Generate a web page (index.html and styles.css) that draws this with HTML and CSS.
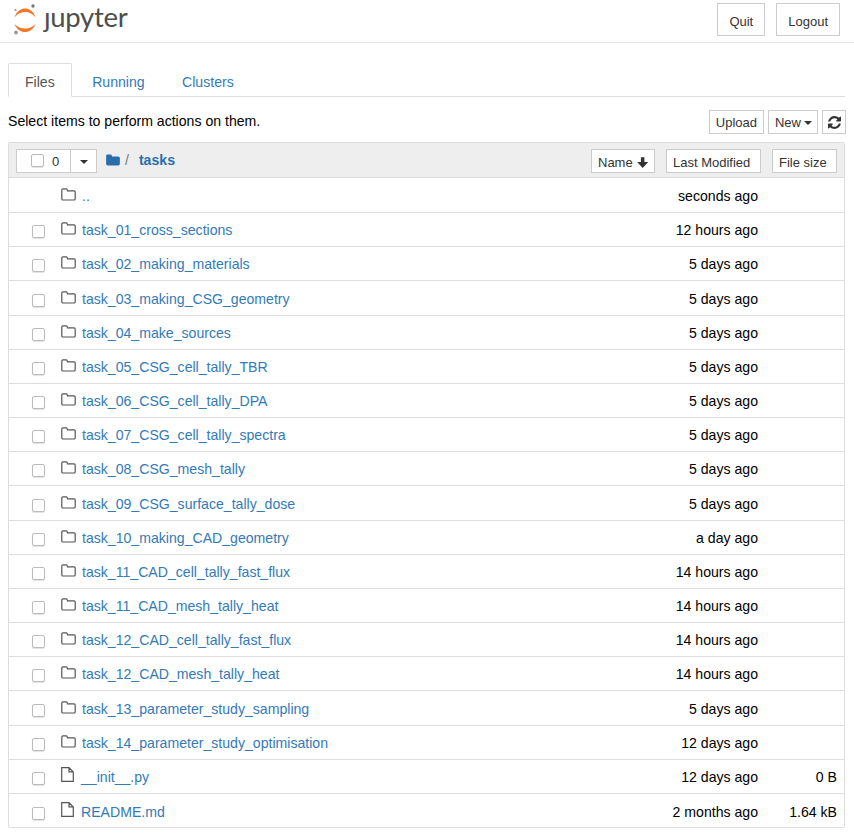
FILE: index.html
```html
<!DOCTYPE html>
<html lang="en">
<head>
<meta charset="utf-8">
<title>Home</title>
<link rel="stylesheet" href="styles.css">
</head>
<body>
<svg class="defs" width="0" height="0" aria-hidden="true">
  <symbol id="folder-o" viewBox="0 0 15 13"><path d="M.8 10.700V2Q.8 .8 2 .8H5Q6 .8 6.200 1.700L6.500 2.800H13Q14.200 2.800 14.200 4V10.700Q14.200 12 13 12H2Q.8 12 .8 10.700Z" fill="none" stroke="currentColor" stroke-width="1.200"/></symbol>
  <symbol id="file-o" viewBox="0 0 13 15"><path d="M.7 .7H8L12.300 4.900V14.300H.7ZM8 .7V4.900H12.300" fill="none" stroke="currentColor" stroke-width="1.200"/></symbol>
</svg>
<header class="topbar">
  <a class="logo" href="#">
    <svg class="logo-mark" viewBox="0 0 26 36" width="26" height="36">
      <path d="M2.500 17.500C4.500 11 9 8.500 13 8.500S21.500 11 23.500 17.500C20.500 13.500 17 12 13 12S5.500 13.500 2.500 17.500Z" fill="#f37726"/>
      <path d="M2.500 24C4.500 29.500 9 32 13 32S21.500 29.500 23.500 24C20.500 27 17 28.500 13 28.500S5.500 27 2.500 24Z" fill="#f37726"/>
      <circle cx="21" cy="6" r="1.700" fill="#767677"/>
      <circle cx="3.500" cy="10" r="1.100" fill="#989798"/>
      <circle cx="4" cy="32.500" r="2" fill="#9e9e9e"/>
    </svg>
    <span class="logo-text">ȷupyter</span>
  </a>
  <div class="top-actions">
    <a class="btn top-btn" href="#">Quit</a>
    <a class="btn top-btn" href="#">Logout</a>
  </div>
</header>
<main class="page">
  <nav class="tabs">
    <a class="tab active" href="#">Files</a>
    <a class="tab" href="#">Running</a>
    <a class="tab" href="#">Clusters</a>
  </nav>
  <div class="toolbar">
    <span>Select items to perform actions on them.</span>
    <div class="toolbar-actions">
      <a class="btn small" href="#">Upload</a>
      <a class="btn small new" href="#">New <i class="caret"></i></a>
      <a class="btn small refresh" href="#" aria-label="Refresh">
        <svg viewBox="0 0 1536 1536" width="13" height="13"><path fill="#333" d="M1511 928q0 5-1 7-64 268-268 434.500T764 1536q-146 0-282.500-55T238 1324l-129 129q-19 19-45 19t-45-19-19-45V960q0-26 19-45t45-19h448q26 0 45 19t19 45-19 45l-137 137q71 66 161 102t187 36q134 0 250-65t186-179q11-17 53-117 8-23 30-23h192q13 0 22.500 9.500t9.500 22.500zm25-800v448q0 26-19 45t-45 19h-448q-26 0-45-19t-19-45 19-45l138-138Q969 256 768 256q-134 0-250 65T332 500q-11 17-53 117-8 23-30 23H50q-13 0-22.500-9.500T18 608v-7q65-268 270-434.500T768 0q146 0 284 55.500T1297 212l130-129q19-19 45-19t45 19 19 45z"/></svg>
      </a>
    </div>
  </div>
  <section class="list">
    <div class="list-head">
      <div class="select-group">
        <span class="select-main"><span class="check"></span><span class="count">0</span></span>
        <span class="select-drop"><i class="caret dark"></i></span>
      </div>
      <svg class="crumb-folder" viewBox="0 0 16 14" width="14" height="12"><path fill="#296eaa" d="M0 2.200Q0 .7 1.500 .7H5Q6.300 .7 6.700 2L7 3H14Q16 3 16 4.800V11.500Q16 13.300 14 13.300H2Q0 13.300 0 11.500Z"/></svg>
      <span class="crumb-sep">/</span>
      <a class="crumb" href="#">tasks</a>
      <div class="sort">
        <a class="btn small sort-name" href="#">Name <svg viewBox="0 0 13 13" width="13" height="13"><path fill="#333" d="M4.500 .5H8.500V6H12.800L6.500 12.800 .2 6H4.500Z"/></svg></a>
        <a class="btn small sort-modified" href="#">Last Modified</a>
        <a class="btn small sort-size" href="#">File size</a>
      </div>
    </div>
    <div class="row parent"><span></span><svg class="icon folder"><use href="#folder-o"/></svg><a href="#">..</a><time>seconds ago</time><span class="size"></span></div>
    <div class="row"><span class="check"></span><svg class="icon folder"><use href="#folder-o"/></svg><a href="#">task_01_cross_sections</a><time>12 hours ago</time><span class="size"></span></div>
    <div class="row"><span class="check"></span><svg class="icon folder"><use href="#folder-o"/></svg><a href="#">task_02_making_materials</a><time>5 days ago</time><span class="size"></span></div>
    <div class="row"><span class="check"></span><svg class="icon folder"><use href="#folder-o"/></svg><a href="#">task_03_making_CSG_geometry</a><time>5 days ago</time><span class="size"></span></div>
    <div class="row"><span class="check"></span><svg class="icon folder"><use href="#folder-o"/></svg><a href="#">task_04_make_sources</a><time>5 days ago</time><span class="size"></span></div>
    <div class="row"><span class="check"></span><svg class="icon folder"><use href="#folder-o"/></svg><a href="#">task_05_CSG_cell_tally_TBR</a><time>5 days ago</time><span class="size"></span></div>
    <div class="row"><span class="check"></span><svg class="icon folder"><use href="#folder-o"/></svg><a href="#">task_06_CSG_cell_tally_DPA</a><time>5 days ago</time><span class="size"></span></div>
    <div class="row"><span class="check"></span><svg class="icon folder"><use href="#folder-o"/></svg><a href="#">task_07_CSG_cell_tally_spectra</a><time>5 days ago</time><span class="size"></span></div>
    <div class="row"><span class="check"></span><svg class="icon folder"><use href="#folder-o"/></svg><a href="#">task_08_CSG_mesh_tally</a><time>5 days ago</time><span class="size"></span></div>
    <div class="row"><span class="check"></span><svg class="icon folder"><use href="#folder-o"/></svg><a href="#">task_09_CSG_surface_tally_dose</a><time>5 days ago</time><span class="size"></span></div>
    <div class="row"><span class="check"></span><svg class="icon folder"><use href="#folder-o"/></svg><a href="#">task_10_making_CAD_geometry</a><time>a day ago</time><span class="size"></span></div>
    <div class="row"><span class="check"></span><svg class="icon folder"><use href="#folder-o"/></svg><a href="#">task_11_CAD_cell_tally_fast_flux</a><time>14 hours ago</time><span class="size"></span></div>
    <div class="row"><span class="check"></span><svg class="icon folder"><use href="#folder-o"/></svg><a href="#">task_11_CAD_mesh_tally_heat</a><time>14 hours ago</time><span class="size"></span></div>
    <div class="row"><span class="check"></span><svg class="icon folder"><use href="#folder-o"/></svg><a href="#">task_12_CAD_cell_tally_fast_flux</a><time>14 hours ago</time><span class="size"></span></div>
    <div class="row"><span class="check"></span><svg class="icon folder"><use href="#folder-o"/></svg><a href="#">task_12_CAD_mesh_tally_heat</a><time>14 hours ago</time><span class="size"></span></div>
    <div class="row"><span class="check"></span><svg class="icon folder"><use href="#folder-o"/></svg><a href="#">task_13_parameter_study_sampling</a><time>5 days ago</time><span class="size"></span></div>
    <div class="row"><span class="check"></span><svg class="icon folder"><use href="#folder-o"/></svg><a href="#">task_14_parameter_study_optimisation</a><time>12 days ago</time><span class="size"></span></div>
    <div class="row file-row"><span class="check"></span><svg class="icon file"><use href="#file-o"/></svg><a href="#">__init__.py</a><time>12 days ago</time><span class="size">0 B</span></div>
    <div class="row file-row"><span class="check"></span><svg class="icon file"><use href="#file-o"/></svg><a href="#">README.md</a><time>2 months ago</time><span class="size">1.64 kB</span></div>
  </section>
</main>
</body>
</html>
```

FILE: styles.css
```css
* { box-sizing: border-box; }
html, body { margin: 0; padding: 0; }
body { font-family: "Liberation Sans", Arial, sans-serif; font-size: 14.1px; line-height: 20px; color: #000; background: #fff; }
a { color: #337ab7; text-decoration: none; }
.defs { position: absolute; }

.topbar { display: flex; justify-content: space-between; height: 43px; border-bottom: 1px solid #e7e7e7; padding: 0 14px 0 12px; }
.logo { display: flex; align-items: flex-start; }
.logo-text { font-family: Lato, sans-serif; font-size: 27.5px; line-height: 33px; color: #4e4e4e; margin-left: 6px; letter-spacing: -.3px; }
.top-actions { display: flex; gap: 11px; padding-top: 3px; }

.btn { display: inline-flex; align-items: center; justify-content: center; gap: 4px; background: #fff; border: 1px solid #ccc; color: #333; font-size: 13px; white-space: nowrap; }
.top-btn { height: 33px; padding: 4px 11px 0; }
.small { height: 24px; padding: 1px 6px 0; font-size: 13px; }
.new { padding: 1px 5px 0 6px; gap: 3px; }

.page { padding: 0 9px 0 8px; }
.tabs { display: flex; height: 54px; padding-top: 20px; border-bottom: 1px solid #ddd; }
.tab { padding: 8px 16px; height: 34px; border: 1px solid transparent; color: #337ab7; margin-right: 3.4px; }
.tab.active { color: #555; border-color: #ddd #ddd #fff; background: #fff; border-radius: 2px 2px 0 0; }

.toolbar { display: flex; justify-content: space-between; align-items: flex-start; height: 45px; padding-top: 14px; }
.toolbar-actions { display: flex; gap: 4px; margin-right: -1px; margin-top: -1px; }
.refresh { width: 24px; padding: 0; }

.list { border: 1px solid #ddd; border-radius: 2px; }
.list-head { display: flex; align-items: center; height: 35px; padding: 1px 7px 0; background: #eee; border-bottom: 1px solid #ddd; }
.select-group { display: flex; height: 24px; border: 1px solid #ccc; background: #fff; }
.select-main { display: flex; align-items: center; width: 54px; padding-left: 14px; border-right: 1px solid #ccc; font-size: 13px; color: #333; }
.count { margin-left: 8px; padding-top: 3px; }
.select-drop { display: flex; align-items: center; justify-content: center; width: 25px; }
.check { display: block; width: 13px; height: 13px; border: 1px solid #bbb; border-radius: 2px; background: #fff; box-shadow: 0 1px 1px rgba(0,0,0,.12); }
.caret { display: inline-block; width: 0; height: 0; border-top: 4px solid #333; border-left: 4px solid transparent; border-right: 4px solid transparent; }
.select-drop .caret { margin-top: 3px; }
.crumb-folder { margin-left: 9px; margin-top: -1px; }
.crumb-sep { margin-left: 5px; color: #777; margin-top: -1px; }
.crumb { margin-left: 10px; font-weight: 700; color: #296eaa; margin-top: -1px; }
.sort { display: flex; margin-left: auto; gap: 11px; }
.sort .btn { justify-content: flex-start; padding-top: 4px; }
.sort-name { width: 64px; }
.sort-modified { width: 95px; }
.sort-size { width: 65px; }

.row { display: grid; grid-template-columns: 29px 21px 1fr auto 79px; align-items: center; height: 34.18px; padding: 1.2px 7px 0 23px; border-bottom: 1px solid #ddd; }
.row.parent { height: 35px; }
.row:last-child { border-bottom: none; height: 33.2px; padding-top: 2px; }
.row .check { margin-top: 3px; }
.file-row a { margin-left: -1px; }
.row time { text-align: right; }
.size { text-align: right; }
.icon { display: block; color: #555; }
.folder { width: 15px; height: 13px; margin-top: -3px; }
.file { width: 13px; height: 15px; margin-top: -4px; }
```
